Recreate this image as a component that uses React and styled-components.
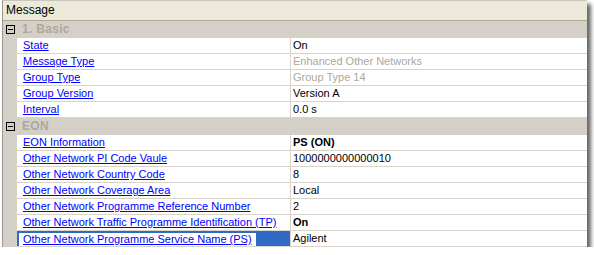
import React from "react";
import styled, { createGlobalStyle } from "styled-components";

const Global = createGlobalStyle`
  html, body { margin: 0; padding: 0; background: #ffffff; }
  body { font-family: Tahoma, "Liberation Sans", Arial, sans-serif; font-size: 11px; }
`;

const Frame = styled.div`
  margin-left: 2px;
  width: 584px;
  background: #d4d0c8;
  border-left: 1px solid #9a9890;
  border-top: 1px solid #c8c6be;
  box-shadow: 4px 4px 4px rgba(0, 0, 0, 0.6);
`;

const Header = styled.div`
  height: 19px;
  line-height: 19px;
  background: #ece9d8;
  border-bottom: 1px solid #aca899;
  padding-left: 3px;
  color: #000;
  font-size: 12px;
`;

const Category = styled.div`
  display: flex;
  align-items: center;
  height: 16px;
  background: #d4d0c8;
  border-bottom: 1px solid #d4d0c8;
`;

const Toggle = styled.span`
  box-sizing: border-box;
  width: 9px;
  height: 9px;
  margin: 0 7px 0 3px;
  border: 1px solid #000;
  position: relative;
  &::after {
    content: "";
    position: absolute;
    left: 1px;
    right: 1px;
    top: 3px;
    height: 1px;
    background: #000;
  }
`;

const CatTitle = styled.span`
  font-weight: bold;
  color: #aca899;
  font-size: 12px;
  letter-spacing: 0.3px;
`;

const Row = styled.div`
  display: flex;
  height: 16px;
  margin-left: 14px;
  background: #ffffff;
  border-bottom: 1px solid #d8d4c8;
  box-sizing: border-box;
`;

const NameCell = styled.div`
  box-sizing: border-box;
  width: 274px;
  flex: none;
  border-right: 1px solid #d8d4c8;
  padding-left: ${(p) => (p.$selected ? "2px" : "6px")};
  padding-top: ${(p) => (p.$selected ? "1px" : "0")};
  line-height: 15px;
  background: ${(p) => (p.$selected ? "#316ac5" : "#ffffff")};
  white-space: nowrap;
  overflow: hidden;
`;

const Link = styled.span`
  color: #0000ff;
  text-decoration: underline;
  ${(p) =>
    p.$selected &&
    `
    display: inline-block;
    background: #ffffff;
    padding: 0 4px 0 4px;
    height: 13px;
    line-height: 13px;
  `}
`;

const ValueCell = styled.div`
  flex: 1;
  padding-left: 2px;
  line-height: 15px;
  color: ${(p) => (p.$disabled ? "#aca899" : "#000000")};
  font-weight: ${(p) => (p.$bold ? "bold" : "normal")};
  white-space: nowrap;
`;

const groups = [
  {
    title: "1. Basic",
    rows: [
      { name: "State", value: "On" },
      { name: "Message Type", value: "Enhanced Other Networks", disabled: true },
      { name: "Group Type", value: "Group Type 14", disabled: true },
      { name: "Group Version", value: "Version A" },
      { name: "Interval", value: "0.0 s" },
    ],
  },
  {
    title: "EON",
    rows: [
      { name: "EON Information", value: "PS (ON)", bold: true },
      { name: "Other Network PI Code Vaule", value: "1000000000000010" },
      { name: "Other Network Country Code", value: "8" },
      { name: "Other Network Coverage Area", value: "Local" },
      { name: "Other Network Programme Reference Number", value: "2" },
      { name: "Other Network Traffic Programme Identification (TP)", value: "On", bold: true },
      { name: "Other Network Programme Service Name (PS)", value: "Agilent", selected: true },
    ],
  },
];

export default function App() {
  return (
    <>
      <Global />
      <Frame>
        <Header>Message</Header>
        {groups.map((g) => (
          <div key={g.title}>
            <Category>
              <Toggle />
              <CatTitle>{g.title}</CatTitle>
            </Category>
            {g.rows.map((r) => (
              <Row key={r.name}>
                <NameCell $selected={r.selected}>
                  <Link $selected={r.selected}>{r.name}</Link>
                </NameCell>
                <ValueCell $disabled={r.disabled} $bold={r.bold}>
                  {r.value}
                </ValueCell>
              </Row>
            ))}
          </div>
        ))}
      </Frame>
    </>
  );
}
